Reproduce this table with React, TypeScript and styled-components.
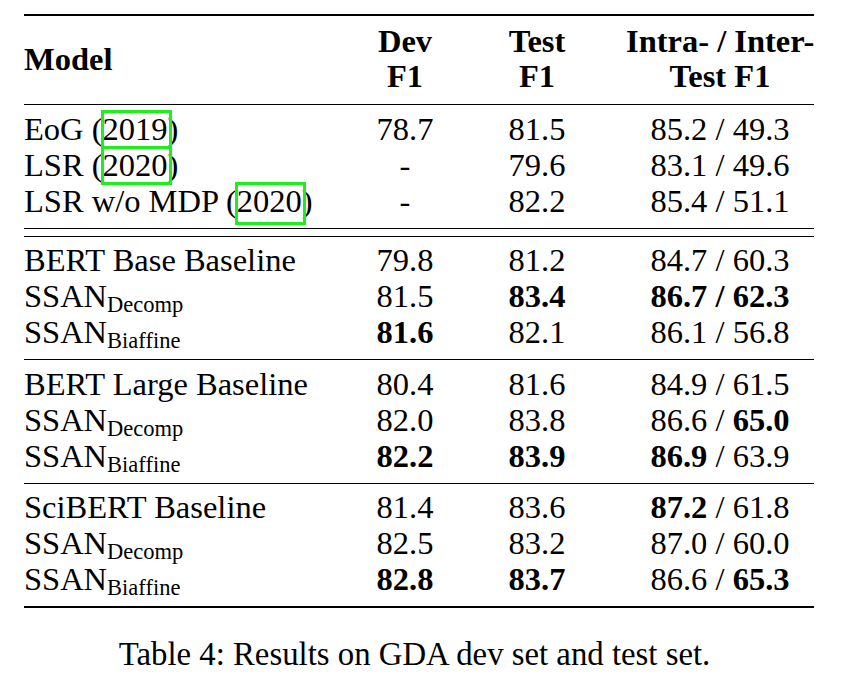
import React from "react";
import styled, { createGlobalStyle } from "styled-components";

const GlobalStyle = createGlobalStyle`
  html, body { margin: 0; padding: 0; background: #fff; }
  body {
    font-family: "Liberation Serif", "Times New Roman", serif;
    color: #000;
  }
`;

const COLS = "338px 86px 178px 188px";
const FONT = "32.5px";

const Page = styled.div`
  padding: 14px 0 0 24px;
  width: 790px;
`;

const Rule = styled.div<{ $thick?: boolean }>`
  height: ${(p) => (p.$thick ? 2 : 1)}px;
  background: #000;
`;

const DoubleRule = styled.div`
  display: flex;
  flex-direction: column;
  gap: 7px;
`;

const HeaderRow = styled.div`
  display: grid;
  grid-template-columns: ${COLS};
  align-items: center;
  padding: 8px 0 10px;
  font-size: ${FONT};
  font-weight: bold;
  line-height: 35px;
`;

const HeadCell = styled.div<{ $align?: "left" | "center" }>`
  text-align: ${(p) => p.$align ?? "center"};
  white-space: nowrap;
`;

const Group = styled.div`
  display: grid;
  grid-template-columns: ${COLS};
  padding: 5.5px 0 9px;
  font-size: ${FONT};
  line-height: 36px;
`;

const Cell = styled.div<{ $align?: "left" | "center"; $bold?: boolean }>`
  text-align: ${(p) => p.$align ?? "center"};
  font-weight: ${(p) => (p.$bold ? "bold" : "normal")};
  white-space: nowrap;
`;

const Strong = styled.b`
  font-weight: bold;
`;

const Sub = styled.sub`
  font-size: 22.5px;
  vertical-align: -4.5px;
  line-height: 0;
`;

const Cite = styled.span<{ $tall?: boolean }>`
  position: relative;
  &::after {
    content: "";
    position: absolute;
    left: -2px;
    right: -4px;
    top: -1px;
    bottom: ${(p) => (p.$tall ? -6 : -2)}px;
    border: 3px solid rgb(30, 238, 30);
    pointer-events: none;
  }
`;

const Caption = styled.div`
  margin-top: 28px;
  padding-right: 9px;
  font-size: 32.8px;
  line-height: 36px;
  text-align: center;
  white-space: nowrap;
`;

type Row = {
  model: React.ReactNode;
  dev: string;
  devBold?: boolean;
  test: string;
  testBold?: boolean;
  intra: React.ReactNode;
};

const ssan = (kind: string) => (
  <>
    SSAN<Sub>{kind}</Sub>
  </>
);

const groups: Row[][] = [
  [
    { model: <>EoG (<Cite>2019</Cite>)</>, dev: "78.7", test: "81.5", intra: "85.2 / 49.3" },
    { model: <>LSR (<Cite>2020</Cite>)</>, dev: "-", test: "79.6", intra: "83.1 / 49.6" },
    { model: <>LSR w/o MDP (<Cite $tall>2020</Cite>)</>, dev: "-", test: "82.2", intra: "85.4 / 51.1" },
  ],
  [
    { model: "BERT Base Baseline", dev: "79.8", test: "81.2", intra: "84.7 / 60.3" },
    { model: ssan("Decomp"), dev: "81.5", test: "83.4", testBold: true, intra: <Strong>86.7 / 62.3</Strong> },
    { model: ssan("Biaffine"), dev: "81.6", devBold: true, test: "82.1", intra: "86.1 / 56.8" },
  ],
  [
    { model: "BERT Large Baseline", dev: "80.4", test: "81.6", intra: "84.9 / 61.5" },
    { model: ssan("Decomp"), dev: "82.0", test: "83.8", intra: <>86.6 / <Strong>65.0</Strong></> },
    { model: ssan("Biaffine"), dev: "82.2", devBold: true, test: "83.9", testBold: true, intra: <><Strong>86.9</Strong> / 63.9</> },
  ],
  [
    { model: "SciBERT Baseline", dev: "81.4", test: "83.6", intra: <><Strong>87.2</Strong> / 61.8</> },
    { model: ssan("Decomp"), dev: "82.5", test: "83.2", intra: "87.0 / 60.0" },
    { model: ssan("Biaffine"), dev: "82.8", devBold: true, test: "83.7", testBold: true, intra: <>86.6 / <Strong>65.3</Strong></> },
  ],
];

function RowGroup({ rows }: { rows: Row[] }) {
  return (
    <Group>
      {rows.map((r, i) => (
        <React.Fragment key={i}>
          <Cell $align="left">{r.model}</Cell>
          <Cell $bold={r.devBold}>{r.dev}</Cell>
          <Cell $bold={r.testBold}>{r.test}</Cell>
          <Cell>{r.intra}</Cell>
        </React.Fragment>
      ))}
    </Group>
  );
}

export default function App() {
  return (
    <>
      <GlobalStyle />
      <Page>
        <Rule $thick />
        <HeaderRow>
          <HeadCell $align="left">Model</HeadCell>
          <HeadCell>
            Dev
            <br />
            F1
          </HeadCell>
          <HeadCell>
            Test
            <br />
            F1
          </HeadCell>
          <HeadCell>
            Intra- / Inter-
            <br />
            Test F1
          </HeadCell>
        </HeaderRow>
        <Rule />
        <RowGroup rows={groups[0]} />
        <DoubleRule>
          <Rule />
          <Rule />
        </DoubleRule>
        <RowGroup rows={groups[1]} />
        <Rule />
        <RowGroup rows={groups[2]} />
        <Rule />
        <RowGroup rows={groups[3]} />
        <Rule $thick />
        <Caption>Table 4: Results on GDA dev set and test set.</Caption>
      </Page>
    </>
  );
}
